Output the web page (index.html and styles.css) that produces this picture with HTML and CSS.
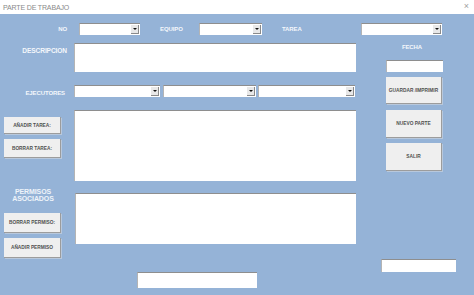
FILE: index.html
```html
<!DOCTYPE html>
<html lang="es">
<head>
  <meta charset="UTF-8" />
  <title>Parte de trabajo</title>
  <link rel="stylesheet" href="styles.css">
</head>
<body>
  <div class="window">
    <div class="titlebar">
      <span class="title">PARTE DE TRABAJO</span>
      <span class="close">&#215;</span>
    </div>

    <div class="form">
      <div class="top-row">
        <div class="lbl lbl-no">NO</div>
        <div class="combo combo-no"><span class="arrow"></span></div>
        <div class="lbl lbl-equipo">EQUIPO</div>
        <div class="combo combo-equipo"><span class="arrow"></span></div>
        <div class="lbl lbl-tarea">TAREA</div>
        <div class="combo combo-tarea"><span class="arrow"></span></div>
      </div>

      <div class="main">
        <div class="col-left">
          <div class="lbl lbl-desc">DESCRIPCION</div>
          <div class="lbl lbl-ejec">EJECUTORES</div>
          <button class="btn btn-add-tarea">AÑADIR TAREA:</button>
          <button class="btn btn-del-tarea">BORRAR TAREA:</button>
          <div class="lbl lbl-permisos">PERMISOS<br>ASOCIADOS</div>
          <button class="btn btn-del-permiso">BORRAR PERMISO:</button>
          <button class="btn btn-add-permiso">AÑADIR PERMISO</button>
        </div>

        <div class="col-mid">
          <div class="textbox tb-desc"></div>
          <div class="ejec-row">
            <div class="combo combo-ej1"><span class="arrow"></span></div>
            <div class="combo combo-ej2"><span class="arrow"></span></div>
            <div class="combo combo-ej3"><span class="arrow"></span></div>
          </div>
          <div class="textbox tb-tareas"></div>
          <div class="textbox tb-permisos"></div>
          <div class="textbox tb-bottom"></div>
        </div>

        <div class="col-right">
          <div class="lbl lbl-fecha">FECHA</div>
          <div class="textbox tb-fecha"></div>
          <button class="btn btn-side btn-guardar">GUARDAR /IMPRIMIR</button>
          <button class="btn btn-side btn-nuevo">NUEVO PARTE</button>
          <button class="btn btn-side btn-salir">SALIR</button>
          <div class="textbox tb-status"></div>
        </div>
      </div>
    </div>
  </div>
</body>
</html>
```

FILE: styles.css
```css
html, body {
  margin: 0;
  padding: 0;
}
body {
  width: 474px;
  height: 295px;
  overflow: hidden;
  font-family: 'Liberation Sans', Arial, sans-serif;
  background: #95b3d7;
}
.window {
  display: flex;
  flex-direction: column;
  height: 295px;
}
.titlebar {
  height: 14px;
  background: #fff;
  display: flex;
  align-items: center;
  justify-content: space-between;
  padding: 0 5px 0 3px;
}
.title {
  font-size: 7px;
  color: #8a8a8a;
  letter-spacing: -0.15px;
}
.close {
  font-size: 9px;
  color: #a0a0a0;
  margin-top: -3px;
}
.form {
  flex: 1;
  background: #95b3d7;
}

/* labels */
.lbl {
  color: #f4f7fb;
  font-size: 6px;
  font-weight: bold;
  line-height: 10px;
  letter-spacing: -0.1px;
}

/* white controls */
.textbox, .combo {
  background: #fff;
  border-top: 1px solid #8e8e8e;
  border-left: 1px solid #b4b4b4;
  box-sizing: border-box;
}
.combo {
  height: 12px;
  position: relative;
}
.combo .arrow {
  position: absolute;
  right: 1px;
  top: 1px;
  width: 7px;
  height: 8px;
  background: #e8e8e8;
  border-right: 1px solid #8a8a8a;
  border-bottom: 1px solid #8a8a8a;
}
.combo .arrow::after {
  content: '';
  position: absolute;
  left: 2px;
  top: 3px;
  border-left: 2px solid transparent;
  border-right: 2px solid transparent;
  border-top: 2px solid #111;
}

/* buttons */
.btn {
  display: block;
  box-sizing: border-box;
  padding: 0;
  background: #efefef;
  border: none;
  border-right: 1px solid #9c9c9c;
  border-bottom: 1px solid #9c9c9c;
  box-shadow: 1px 1px 0 #b8c8dc;
  font-family: 'Liberation Sans', Arial, sans-serif;
  font-size: 4.8px;
  font-weight: bold;
  color: #505050;
  text-align: center;
}

/* top row */
.top-row {
  display: flex;
  align-items: center;
  margin-top: 9px;
  height: 12px;
}
.lbl-no {
  width: 79px;
  box-sizing: border-box;
  text-align: right;
  padding-right: 12px;
}
.combo-no { width: 61px; }
.lbl-equipo {
  width: 59px;
  box-sizing: border-box;
  padding-left: 20px;
}
.combo-equipo { width: 63px; }
.lbl-tarea {
  width: 99px;
  box-sizing: border-box;
  padding-left: 20px;
}
.combo-tarea { width: 81px; }

/* main area */
.main {
  display: flex;
  margin-top: 8px;
}
.col-left {
  width: 74px;
  display: flex;
  flex-direction: column;
}
.lbl-desc, .lbl-ejec {
  text-align: right;
  padding-right: 7px;
}
.lbl-desc { margin-top: 3px; font-size: 6.6px; }
.lbl-ejec { margin-top: 32px; padding-right: 9px; }
.col-left .btn {
  width: 57px;
  margin-left: 4px;
}
.btn-add-tarea { margin-top: 19px; height: 17px; }
.btn-del-tarea { margin-top: 5px; height: 19px; }
.lbl-permisos {
  width: 66px;
  text-align: center;
  font-size: 7px;
  line-height: 7px;
  margin-top: 30px;
  color: #eef3fa;
}
.btn-del-permiso { margin-top: 11px; height: 20px; }
.btn-add-permiso { margin-top: 5px; height: 20px; }

.col-mid {
  width: 282px;
  display: flex;
  flex-direction: column;
}
.tb-desc { height: 29px; }
.ejec-row {
  display: flex;
  margin-top: 13px;
}
.combo-ej1 { width: 86px; }
.combo-ej2 { width: 93px; margin-left: 3px; }
.combo-ej3 { width: 97px; margin-left: 2px; }
.tb-tareas { margin-top: 13px; height: 71px; }
.tb-permisos { margin-top: 12px; margin-left: 1px; height: 51px; }
.tb-bottom { margin-top: 28px; margin-left: 63px; width: 120px; height: 16px; }

.col-right {
  flex: 1;
  display: flex;
  flex-direction: column;
}
.lbl-fecha {
  width: 57px;
  margin-left: 30px;
  box-sizing: border-box;
  padding-right: 5px;
  text-align: center;
  line-height: 8px;
}
.tb-fecha { margin-top: 9px; margin-left: 30px; width: 57px; height: 12px; }
.btn-side {
  width: 56px;
  margin-left: 30px;
}
.btn-guardar { margin-top: 5px; height: 27px; }
.btn-nuevo { margin-top: 6px; height: 28px; }
.btn-salir { margin-top: 5px; height: 28px; }
.tb-status { margin-top: 88px; margin-left: 25px; width: 75px; height: 13px; }
```
